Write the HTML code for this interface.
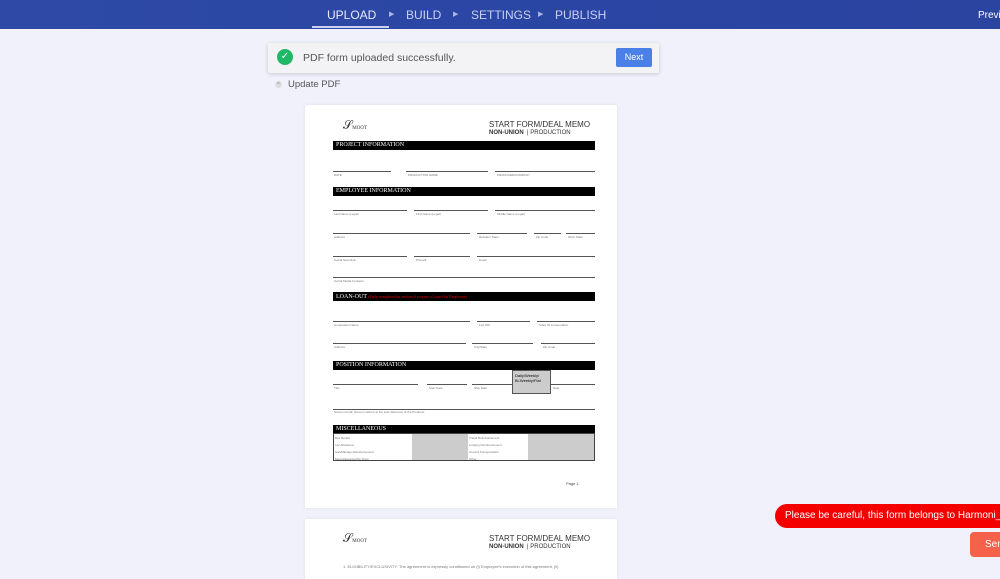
<!DOCTYPE html><html><head><style>
*{margin:0;padding:0;box-sizing:border-box}
body{width:1000px;height:570px;overflow:hidden;background:#f0f1fb;font-family:"Liberation Sans",sans-serif;position:relative}
.a{position:absolute}
.hd{left:0;top:0;width:1000px;height:29px;background:linear-gradient(90deg,#2e4aa6,#2a45a3 60%,#2b44a0)}
.nav{color:#e8ecff;font-size:12px;top:8px}
.ar{color:#aab5e0;font-size:7px;top:10px}
.pg{background:#fff;box-shadow:0 0 3px rgba(0,0,0,.08)}
.l{position:absolute;height:1px;background:#555}
.t{position:absolute;font-size:3px;color:#777}
.bar{position:absolute;left:333px;width:262px;height:9px;background:#000;color:#fff;font-size:6px;font-family:"Liberation Serif",serif;line-height:9px;padding-left:3px}
</style></head><body>
<div class="a hd"></div>
<div class="a nav" style="left:327px">UPLOAD</div>
<div class="a" style="left:312px;top:26px;width:77px;height:2px;background:#c9d0f0"></div>
<div class="a ar" style="left:389px">▶</div>
<div class="a nav" style="left:406px;color:#c8d1f3">BUILD</div>
<div class="a ar" style="left:453px">▶</div>
<div class="a nav" style="left:471px;color:#c8d1f3">SETTINGS</div>
<div class="a ar" style="left:538px">▶</div>
<div class="a nav" style="left:555px;color:#c8d1f3">PUBLISH</div>
<div class="a" style="left:978px;top:10px;color:#fff;font-size:10px">Previe</div>

<div class="a" style="left:268px;top:43px;width:391px;height:30px;background:#f3f3f5;box-shadow:0 1px 4px rgba(0,0,0,.18);border-radius:2px"></div>
<div class="a" style="left:277px;top:49px;width:16px;height:16px;border-radius:50%;background:#1fb866;color:#fff;font-size:10px;text-align:center;line-height:16px">✓</div>
<div class="a" style="left:303px;top:52px;font-size:10.5px;color:#555">PDF form uploaded successfully.</div>
<div class="a" style="left:616px;top:48px;width:36px;height:19px;background:#4a80e8;border-radius:2px;color:#fff;font-size:9px;text-align:center;line-height:19px">Next</div>
<div class="a" style="left:275px;top:81px;width:7px;height:7px;border-radius:50%;background:#ddd;font-size:5px;color:#888;text-align:center;line-height:7px">×</div>
<div class="a" style="left:288px;top:79px;font-size:9.5px;color:#555">Update PDF</div>

<div class="a pg" style="left:305px;top:105px;width:312px;height:403px"></div>
<div class="a pg" style="left:305px;top:519px;width:312px;height:60px"></div>

<div class="a" style="left:343px;top:118px;font-family:'Liberation Serif',serif;font-size:12px;color:#333">𝒮<span style="font-size:5px">MOOT</span></div>
<div class="a" style="left:489px;top:120px;font-size:8px;color:#333">START FORM/DEAL MEMO</div>
<div class="a" style="left:489px;top:130px;font-size:6px;color:#333"><b>NON-UNION</b> &nbsp;| PRODUCTION</div>
<div class="bar" style="top:141px">PROJECT INFORMATION</div>
<div class="l" style="left:333px;top:171px;width:58px"></div><div class="l" style="left:406px;top:171px;width:82px"></div><div class="l" style="left:495px;top:171px;width:100px"></div>
<div class="t" style="left:334px;top:173px">DATE</div><div class="t" style="left:408px;top:173px">PRODUCTION NAME</div><div class="t" style="left:497px;top:173px">PRODUCER/COMPANY</div>
<div class="bar" style="top:187px">EMPLOYEE INFORMATION</div>
<div class="l" style="left:333px;top:210px;width:74px"></div><div class="l" style="left:414px;top:210px;width:74px"></div><div class="l" style="left:495px;top:210px;width:100px"></div>
<div class="t" style="left:334px;top:212px">Last Name (Legal)</div><div class="t" style="left:416px;top:212px">First Name (Legal)</div><div class="t" style="left:497px;top:212px">Middle Name (Legal)</div>
<div class="l" style="left:333px;top:233px;width:137px"></div><div class="l" style="left:477px;top:233px;width:50px"></div><div class="l" style="left:534px;top:233px;width:27px"></div><div class="l" style="left:566px;top:233px;width:29px"></div>
<div class="t" style="left:334px;top:235px">Address</div><div class="t" style="left:479px;top:235px">Resident State</div><div class="t" style="left:536px;top:235px">Zip Code</div><div class="t" style="left:568px;top:235px">Work State</div>
<div class="l" style="left:333px;top:256px;width:74px"></div><div class="l" style="left:414px;top:256px;width:56px"></div><div class="l" style="left:477px;top:256px;width:118px"></div>
<div class="t" style="left:334px;top:258px">Social Security#</div><div class="t" style="left:416px;top:258px">Phone#</div><div class="t" style="left:479px;top:258px">Email</div>
<div class="l" style="left:333px;top:277px;width:262px"></div>
<div class="t" style="left:334px;top:279px">Social Media Contacts</div>
<div class="bar" style="top:292px">LOAN-OUT <span style="color:#e00;font-size:4px">(Only complete this section if you are a Loan-Out Employee)</span></div>
<div class="l" style="left:333px;top:321px;width:137px"></div><div class="l" style="left:477px;top:321px;width:53px"></div><div class="l" style="left:537px;top:321px;width:58px"></div>
<div class="t" style="left:334px;top:323px">Corporation Name</div><div class="t" style="left:479px;top:323px">Fed ID#</div><div class="t" style="left:539px;top:323px">State Of Incorporation</div>
<div class="l" style="left:333px;top:343px;width:133px"></div><div class="l" style="left:472px;top:343px;width:61px"></div><div class="l" style="left:541px;top:343px;width:54px"></div>
<div class="t" style="left:334px;top:345px">Address</div><div class="t" style="left:474px;top:345px">City/State</div><div class="t" style="left:543px;top:345px">Zip Code</div>
<div class="bar" style="top:361px">POSITION INFORMATION</div>
<div class="a" style="left:512px;top:370px;width:39px;height:24px;background:#ccc;border:1px solid #555;font-size:4px;padding:2px">Daily/Weekly/<br>Bi-Weekly/Flat</div>
<div class="l" style="left:333px;top:384px;width:85px"></div><div class="l" style="left:427px;top:384px;width:40px"></div><div class="l" style="left:472px;top:384px;width:40px"></div><div class="l" style="left:551px;top:384px;width:44px"></div>
<div class="t" style="left:334px;top:386px">Title</div><div class="t" style="left:429px;top:386px">Start Date</div><div class="t" style="left:474px;top:386px">Ship Date</div><div class="t" style="left:553px;top:386px">Rate</div>
<div class="l" style="left:333px;top:409px;width:262px"></div>
<div class="t" style="left:334px;top:410px">Screen Credit: Screen credit is at the sole discretion of the Producer.</div>
<div class="bar" style="top:425px">MISCELLANEOUS</div>
<div class="a" style="left:333px;top:433px;width:262px;height:28px;border:1px solid #444;background:linear-gradient(90deg,#fff 0 78px,#ccc 78px 134px,#fff 134px 194px,#ccc 194px)"></div>
<div class="t" style="left:335px;top:435px;line-height:7px">Box Rental<br>Car Allowance<br>Gas/Mileage Reimbursement<br>Meal Allowance/Per Diem</div>
<div class="t" style="left:469px;top:435px;line-height:7px">Travel Reimbursement<br>Lodging Reimbursement<br>Ground Transportation<br>Other</div>
<div class="a" style="left:566px;top:481px;font-size:4px;color:#444">Page 1</div>

<div class="a" style="left:343px;top:531px;font-family:'Liberation Serif',serif;font-size:12px;color:#333">𝒮<span style="font-size:5px">MOOT</span></div>
<div class="a" style="left:489px;top:534px;font-size:8px;color:#333">START FORM/DEAL MEMO</div>
<div class="a" style="left:489px;top:544px;font-size:6px;color:#333"><b>NON-UNION</b> &nbsp;| PRODUCTION</div>
<div class="t" style="left:343px;top:564px;font-size:4px">1. ELIGIBILITY/EXCLUSIVITY: The agreement is expressly conditioned on (i) Employee's execution of this agreement, (ii)</div>

<div class="a" style="left:775px;top:504px;width:240px;height:24px;background:#f40000;border-radius:12px;color:#fff;font-size:10px;line-height:24px;padding-left:10px;white-space:nowrap">Please be careful, this form belongs to Harmoni_</div>
<div class="a" style="left:970px;top:532px;width:40px;height:25px;background:#f5614a;border-radius:4px;color:#fff;font-size:10px;line-height:25px;padding-left:15px">Sen</div>
</body></html>
